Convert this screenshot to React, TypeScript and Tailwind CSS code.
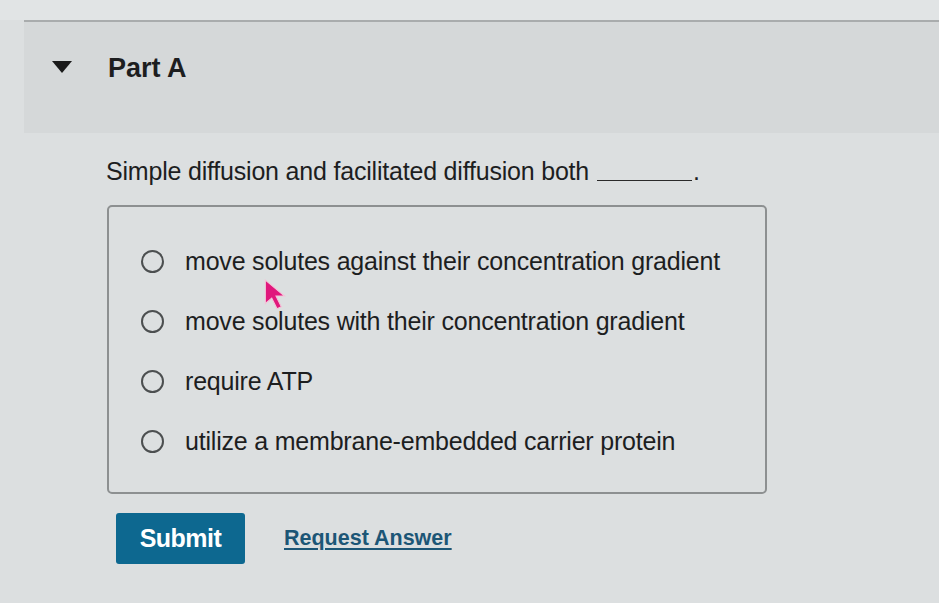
import React from "react";

const options = [
  "move solutes against their concentration gradient",
  "move solutes with their concentration gradient",
  "require ATP",
  "utilize a membrane-embedded carrier protein",
];

export default function App() {
  return (
    <div
      className="relative w-[939px] h-[603px] overflow-hidden bg-[#dcdfe0] text-[#1d1e1f]"
      style={{ fontFamily: '"Liberation Sans", Arial, sans-serif' }}
    >
      <div className="h-[20px] bg-[#e1e4e5]" />
      <div className="ml-[24px] h-[113px] border-t-2 border-[#a9acad] bg-[#d5d8d9] flex items-start">
        <div className="mt-[39px] ml-[28px] w-0 h-0 border-l-[10px] border-r-[10px] border-t-[12px] border-l-transparent border-r-transparent border-t-[#1a1a1a]" />
        <div className="ml-[36px] mt-[31px] text-[27px] font-bold leading-[30px]">Part A</div>
      </div>
      <div className="pl-[106px] pt-[24px]">
        <div className="text-[25px] leading-[28px] tracking-[-0.2px] flex items-end">
          <span>Simple diffusion and facilitated diffusion both</span>
          <span className="ml-[8px] inline-block w-[95px] border-b-[1.5px] border-[#2a2a2a] mb-[4px]" />
          <span className="ml-[1px]">.</span>
        </div>
        <div className="mt-[20px] ml-[1px] w-[660px] h-[289px] border-2 border-[#8d9091] rounded-[5px] pt-[40px] pl-[32px] flex flex-col gap-[32px]">
          {options.map((o) => (
            <div key={o} className="flex items-center h-[28px]">
              <div className="w-[23px] h-[23px] rounded-full border-2 border-[#4c4f50] shrink-0" />
              <span className="ml-[21px] text-[25px] leading-[28px] tracking-[-0.2px]">{o}</span>
            </div>
          ))}
        </div>
        <div className="mt-[19px] ml-[10px] flex items-center">
          <div className="w-[129px] h-[51px] bg-[#0d6890] rounded-[3px] flex items-center justify-center text-white text-[25px] font-bold tracking-[-0.5px]">
            Submit
          </div>
          <div className="ml-[39px] text-[21.5px] font-bold text-[#1c5676] underline underline-offset-[3px] decoration-[2px]">
            Request Answer
          </div>
        </div>
      </div>
      <svg className="absolute left-[263px] top-[278px]" width="26" height="34" viewBox="0 0 24 32">
        <path d="M2 2 L2 24 L8 19 L13 29 L17 27 L12 17 L20 17 Z" fill="#e0177c" stroke="#f3c3d8" strokeWidth="1" />
      </svg>
    </div>
  );
}
